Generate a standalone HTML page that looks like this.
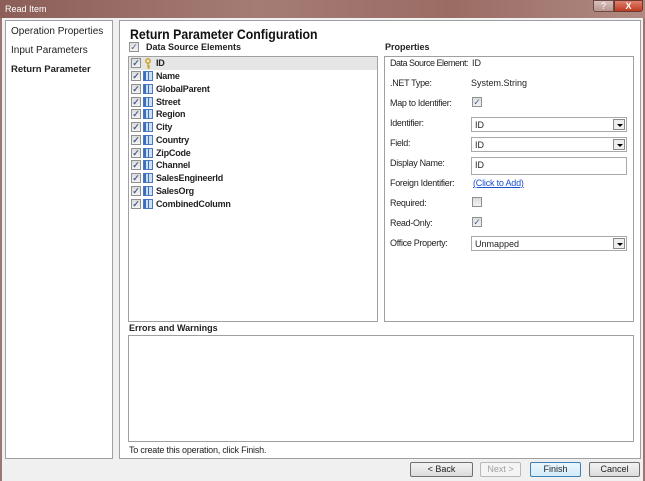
<!DOCTYPE html>
<html><head><style>
*{margin:0;padding:0;box-sizing:border-box}
body{width:645px;height:481px;overflow:hidden;background:#f0f0f0;font-family:"Liberation Sans",sans-serif;font-size:9px;color:#222;position:relative}
.a{position:absolute;white-space:nowrap}
.title{left:0;top:0;width:645px;height:18px;background:linear-gradient(90deg,#8b5f58,#a57c74 40%,#9a6c64 70%,#b08a82);}
.box{position:absolute;background:#fff;border:1px solid #a0a0a0}
.cb{position:absolute;width:10px;height:10px;border:1px solid #8e8f8f;background:linear-gradient(#dcdcdc,#f4f4f4);font-size:9px;line-height:8px;text-align:center;color:#4a5f97}
.row{position:absolute;left:131px;height:13px;font-weight:bold;font-size:9px}
.ic{position:absolute;left:12px;top:1px;width:10px;height:10px;background:linear-gradient(90deg,#3a6fc0 0 2px,#cfe0f5 2px 4px,#3a6fc0 4px 5px,#cfe0f5 5px 8px,#3a6fc0 8px);border:1px solid #4a78c0}
.row span{position:absolute;left:25px;top:1px;letter-spacing:-0.2px}
.lbl{position:absolute;left:390px;letter-spacing:-0.3px}
.dd{position:absolute;left:471px;width:156px;height:15px;border:1px solid #a9a9a9;background:#fff;padding:2px 3px}
.dd i{position:absolute;right:1px;top:1px;width:12px;height:11px;border:1px solid #8a8a8a;background:#eee}
.dd i:after{content:"";position:absolute;left:3px;top:4px;border:3px solid transparent;border-top:3px solid #000;border-bottom:0}
.btn{position:absolute;top:462px;height:15px;border:1px solid #707070;border-radius:2px;background:linear-gradient(#f2f2f2,#dcdcdc);text-align:center;line-height:13px;font-size:9px}
</style></head><body>
<div class="a title"></div>
<div class="a" style="left:5px;top:4px;color:#fff;font-size:9px">Read Item</div>
<div class="a" style="left:593px;top:0;width:21px;height:12px;background:linear-gradient(#d8c0bc,#b89690);border:1px solid #6b4a45;border-radius:0 0 0 3px;color:#fff;text-align:center;font-size:9px;line-height:10px">?</div>
<div class="a" style="left:614px;top:0;width:29px;height:12px;background:linear-gradient(#e08070,#c03a20);border:1px solid #6b3a30;border-radius:0 0 3px 0;color:#fff;text-align:center;font-size:9px;line-height:10px;font-weight:bold">X</div>
<div class="a" style="left:0;top:18px;width:2px;height:463px;background:#9c7670"></div>
<div class="a" style="left:643px;top:18px;width:2px;height:463px;background:#9c7670"></div>

<div class="box" style="left:5px;top:20px;width:108px;height:439px"></div>
<div class="a" style="left:11px;top:26px;font-size:10px">Operation Properties</div>
<div class="a" style="left:11px;top:45px;font-size:10px">Input Parameters</div>
<div class="a" style="left:11px;top:64px;font-weight:bold;font-size:9.5px">Return Parameter</div>

<div class="box" style="left:119px;top:20px;width:522px;height:439px"></div>
<div class="a" style="left:130px;top:26px;font-weight:bold;font-size:14px;color:#111;transform:scaleX(0.88);transform-origin:left">Return Parameter Configuration</div>
<div class="cb" style="left:129px;top:42px">✓</div>
<div class="a" style="left:146px;top:42px;font-weight:bold">Data Source Elements</div>
<div class="a" style="left:385px;top:42px;font-weight:bold">Properties</div>

<div class="box" style="left:128px;top:56px;width:250px;height:266px"></div>
<div class="a" style="left:129px;top:57px;width:248px;height:13px;background:#e6e6e6"></div>
<div class="row" style="top:57px"><div class="cb" style="left:0;top:1px">✓</div><svg style="position:absolute;left:14px;top:1px" width="6" height="11"><circle cx="3" cy="3" r="2.2" fill="none" stroke="#c9a020" stroke-width="1.4"/><path d="M3 5V10M3 8H5M3 10H5" stroke="#c9a020" stroke-width="1.3"/></svg><span>ID</span></div>
<div class="row" style="top:70px"><div class="cb" style="left:0;top:1px">✓</div><div class="ic"></div><span>Name</span></div>
<div class="row" style="top:83px"><div class="cb" style="left:0;top:1px">✓</div><div class="ic"></div><span>GlobalParent</span></div>
<div class="row" style="top:96px"><div class="cb" style="left:0;top:1px">✓</div><div class="ic"></div><span>Street</span></div>
<div class="row" style="top:108px"><div class="cb" style="left:0;top:1px">✓</div><div class="ic"></div><span>Region</span></div>
<div class="row" style="top:121px"><div class="cb" style="left:0;top:1px">✓</div><div class="ic"></div><span>City</span></div>
<div class="row" style="top:134px"><div class="cb" style="left:0;top:1px">✓</div><div class="ic"></div><span>Country</span></div>
<div class="row" style="top:147px"><div class="cb" style="left:0;top:1px">✓</div><div class="ic"></div><span>ZipCode</span></div>
<div class="row" style="top:159px"><div class="cb" style="left:0;top:1px">✓</div><div class="ic"></div><span>Channel</span></div>
<div class="row" style="top:172px"><div class="cb" style="left:0;top:1px">✓</div><div class="ic"></div><span>SalesEngineerId</span></div>
<div class="row" style="top:185px"><div class="cb" style="left:0;top:1px">✓</div><div class="ic"></div><span>SalesOrg</span></div>
<div class="row" style="top:198px"><div class="cb" style="left:0;top:1px">✓</div><div class="ic"></div><span>CombinedColumn</span></div>

<div class="box" style="left:384px;top:56px;width:250px;height:266px"></div>
<div class="lbl a" style="top:58px;letter-spacing:-0.5px">Data Source Element:</div><div class="a" style="left:472px;top:58px">ID</div>
<div class="lbl a" style="top:78px">.NET Type:</div><div class="a" style="left:471px;top:78px">System.String</div>
<div class="lbl a" style="top:98px">Map to Identifier:</div><div class="cb" style="left:472px;top:97px">✓</div>
<div class="lbl a" style="top:118px">Identifier:</div><div class="dd" style="top:117px">ID<i></i></div>
<div class="lbl a" style="top:138px">Field:</div><div class="dd" style="top:137px">ID<i></i></div>
<div class="lbl a" style="top:158px">Display Name:</div><div class="dd" style="top:157px;height:18px">ID</div>
<div class="lbl a" style="top:178px">Foreign Identifier:</div><div class="a" style="left:473px;top:178px;color:#1a4fd0;text-decoration:underline;letter-spacing:-0.2px">(Click to Add)</div>
<div class="lbl a" style="top:198px">Required:</div><div class="cb" style="left:472px;top:197px"></div>
<div class="lbl a" style="top:218px">Read-Only:</div><div class="cb" style="left:472px;top:217px">✓</div>
<div class="lbl a" style="top:238px">Office Property:</div><div class="dd" style="top:236px">Unmapped<i></i></div>

<div class="a" style="left:129px;top:323px;font-weight:bold">Errors and Warnings</div>
<div class="box" style="left:128px;top:335px;width:506px;height:107px"></div>
<div class="a" style="left:129px;top:445px;letter-spacing:-0.2px">To create this operation, click Finish.</div>

<div class="btn" style="left:410px;width:63px">&lt; Back</div>
<div class="btn" style="left:480px;width:41px;color:#a0a0a0;border-color:#b8b8b8;background:#f4f4f4">Next &gt;</div>
<div class="btn" style="left:530px;width:51px;border-color:#3c7fb1;background:linear-gradient(#eaf6fd,#d3ebf9)">Finish</div>
<div class="btn" style="left:589px;width:51px">Cancel</div>
</body></html>
